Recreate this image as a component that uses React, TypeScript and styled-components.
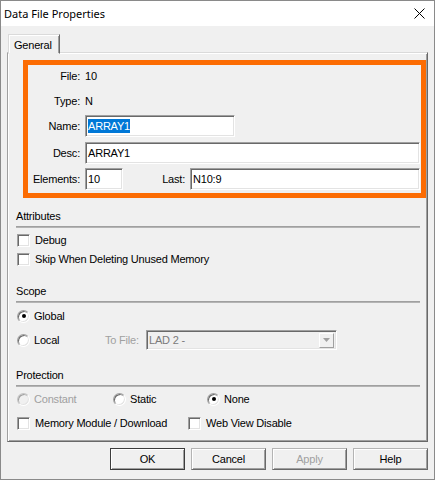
import { ReactNode } from "react";
import styled, { createGlobalStyle } from "styled-components";

const GlobalStyle = createGlobalStyle`
	html, body {
		margin: 0;
		padding: 0;
		background: #f0f0f0;
	}
`;

const Window = styled.div`
	width: 435px;
	height: 480px;
	box-sizing: border-box;
	border: 1px solid #8a8a8a;
	display: flex;
	flex-direction: column;
	background: #f0f0f0;
	font: 11px "Liberation Sans", Arial, sans-serif;
	letter-spacing: -0.2px;
	color: #000;
`;

const TitleBar = styled.div`
	height: 25px;
	flex: none;
	background: #fff;
	display: flex;
	align-items: center;
	justify-content: space-between;
	padding: 0 9px 0 3px;
`;

const Title = styled.span`
	font: 11px "Noto Sans", "Liberation Sans", sans-serif;
	letter-spacing: 0;
`;

const Body = styled.div`
	flex: 1;
	padding: 8px 6px 8px 6px;
	display: flex;
	flex-direction: column;
`;

const TabStrip = styled.div`
	display: flex;
	padding-left: 1px;
	height: 19px;
	position: relative;
	z-index: 1;
	margin-bottom: -1px;
`;

const Tab = styled.div`
	width: 52px;
	height: 20px;
	box-sizing: border-box;
	border: 1px solid;
	border-color: #dadada #696969 transparent #dadada;
	box-shadow: inset 1px 1px 0 #fff, inset -1px 0 0 #a0a0a0;
	background: #f0f0f0;
	padding: 3px 0 0 5px;
	line-height: 14px;
`;

const Panel = styled.div`
	height: 390px;
	box-sizing: border-box;
	border: 1px solid;
	border-color: #dadada #696969 #696969 #a0a0a0;
	box-shadow: inset 1px 1px 0 #fff, inset -1px -1px 0 #a0a0a0;
	padding-top: 7px;
`;

const Highlight = styled.div`
	margin: 0 1px 0 15px;
	border: 5px solid #fc6c03;
	padding: 0 1px 3px 0;
`;

const FieldRow = styled.div<{ $top?: number }>`
	display: flex;
	align-items: center;
	height: 22px;
	gap: 5px;
	margin-top: ${({ $top = 0 }) => $top}px;
`;

const FieldLabel = styled.span<{ $width?: number; $grow?: boolean }>`
	width: ${({ $width = 52 }) => $width}px;
	flex: ${({ $grow }) => ($grow ? "1" : "none")};
	text-align: right;
`;

const TextBox = styled.div<{ $width: number }>`
	width: ${({ $width }) => $width}px;
	height: 22px;
	box-sizing: border-box;
	flex: none;
	background: #fff;
	border: 1px solid;
	border-color: #a0a0a0 #fff #fff #a0a0a0;
	box-shadow: inset 1px 1px 0 #696969, inset -1px -1px 0 #e3e3e3;
	padding-left: 2px;
	line-height: 20px;
	white-space: nowrap;
	overflow: hidden;
`;

const Selected = styled.span`
	background: #0078d7;
	color: #fff;
	padding: 1px 0;
`;

const Section = styled.div`
	margin: 0 7px 0 8px;
`;

const SectionTitle = styled.div<{ $top: number }>`
	line-height: 14px;
	margin-top: ${({ $top }) => $top}px;
`;

const Rule = styled.div`
	margin-top: 3px;
	border-top: 1px solid #a0a0a0;
	border-bottom: 1px solid #b4b4b4;
	margin-bottom: 4px;
`;

const OptionRow = styled.div<{ $top?: number; $height?: number }>`
	display: flex;
	align-items: center;
	height: ${({ $height = 16 }) => $height}px;
	padding-left: 1px;
	margin-top: ${({ $top = 0 }) => $top}px;
`;

const Option = styled.label<{ $width?: number; $disabled?: boolean }>`
	display: flex;
	align-items: center;
	width: ${({ $width }) => ($width ? `${$width}px` : "auto")};
	flex: none;
	color: ${({ $disabled }) => ($disabled ? "#a0a0a0" : "#000")};
`;

const CheckBox = styled.span`
	width: 13px;
	height: 13px;
	box-sizing: border-box;
	flex: none;
	background: #fff;
	border: 1px solid;
	border-color: #a0a0a0 #fff #fff #a0a0a0;
	box-shadow: inset 1px 1px 0 #696969, inset -1px -1px 0 #e3e3e3;
	margin-right: 5px;
`;

const Radio = styled.span<{ $checked?: boolean; $disabled?: boolean }>`
	width: 13px;
	height: 13px;
	box-sizing: border-box;
	flex: none;
	border-radius: 50%;
	background: ${({ $disabled }) => ($disabled ? "#f0f0f0" : "#fff")};
	border: 1px solid;
	border-color: ${({ $disabled }) =>
		$disabled ? "#c4c4c4 #fff #fff #c4c4c4" : "#a0a0a0 #fff #fff #a0a0a0"};
	box-shadow: inset 1px 1px 0 ${({ $disabled }) => ($disabled ? "#a0a0a0" : "#696969")},
		inset -1px -1px 0 #e3e3e3;
	margin-right: 4px;
	display: grid;
	place-items: center;
	&::after {
		content: "";
		width: 4px;
		height: 4px;
		border-radius: 50%;
		background: #000;
		display: ${({ $checked }) => ($checked ? "block" : "none")};
	}
`;

const DisabledText = styled.span`
	color: #a0a0a0;
	width: 41px;
	flex: none;
`;

const Combo = styled.div`
	width: 191px;
	height: 20px;
	box-sizing: border-box;
	display: flex;
	align-items: center;
	justify-content: space-between;
	background: #f0f0f0;
	border: 1px solid;
	border-color: #a0a0a0 #fff #fff #a0a0a0;
	box-shadow: inset 1px 1px 0 #696969, inset -1px -1px 0 #e3e3e3;
	padding: 0 2px 0 2px;
	color: #7a7a7a;
`;

const ComboArrow = styled.span`
	width: 15px;
	height: 15px;
	box-sizing: border-box;
	border: 1px solid;
	border-color: #fff #a0a0a0 #a0a0a0 #fff;
	display: grid;
	place-items: center;
`;

const ButtonRow = styled.div`
	display: flex;
	justify-content: flex-end;
	gap: 6px;
	margin-top: 6px;
`;

const Button = styled.button<{ $default?: boolean }>`
	width: 75px;
	height: 22px;
	box-sizing: border-box;
	font: inherit;
	letter-spacing: inherit;
	background: #f0f0f0;
	color: ${({ disabled }) => (disabled ? "#a0a0a0" : "#000")};
	border: 1px solid;
	border-color: ${({ $default }) =>
		$default ? "#3c3c3c" : "#b4b4b4 #696969 #696969 #b4b4b4"};
	box-shadow: inset 1px 1px 0 #fff, inset -1px -1px 0 #a0a0a0;
	padding: 0;
`;

const CloseIcon = () => (
	<svg width="11" height="11" viewBox="0 0 11 11">
		<path d="M0.5 0.5L10.5 10.5M10.5 0.5L0.5 10.5" stroke="#000" strokeWidth="1" />
	</svg>
);

const DownArrow = () => (
	<svg width="7" height="4" viewBox="0 0 7 4">
		<path d="M0 0H7L3.5 4Z" fill="#a0a0a0" />
	</svg>
);

const Check = ({ children, width }: { children: ReactNode; width?: number }) => (
	<Option $width={width}>
		<CheckBox />
		{children}
	</Option>
);

const RadioOption = ({
	children,
	width,
	checked,
	disabled
}: {
	children: ReactNode;
	width?: number;
	checked?: boolean;
	disabled?: boolean;
}) => (
	<Option $width={width} $disabled={disabled}>
		<Radio $checked={checked} $disabled={disabled} />
		{children}
	</Option>
);

const App = () => (
	<Window>
		<GlobalStyle />
		<TitleBar>
			<Title>Data File Properties</Title>
			<CloseIcon />
		</TitleBar>
		<Body>
			<TabStrip>
				<Tab>General</Tab>
			</TabStrip>
			<Panel>
				<Highlight>
					<FieldRow>
						<FieldLabel>File:</FieldLabel>
						<span>10</span>
					</FieldRow>
					<FieldRow $top={3}>
						<FieldLabel>Type:</FieldLabel>
						<span>N</span>
					</FieldRow>
					<FieldRow $top={3}>
						<FieldLabel>Name:</FieldLabel>
						<TextBox $width={150}>
							<Selected>ARRAY1</Selected>
						</TextBox>
					</FieldRow>
					<FieldRow $top={5}>
						<FieldLabel>Desc:</FieldLabel>
						<TextBox $width={335}>ARRAY1</TextBox>
					</FieldRow>
					<FieldRow $top={4}>
						<FieldLabel>Elements:</FieldLabel>
						<TextBox $width={38}>10</TextBox>
						<FieldLabel $grow>Last:</FieldLabel>
						<TextBox $width={230}>N10:9</TextBox>
					</FieldRow>
				</Highlight>

				<Section>
					<SectionTitle $top={11}>Attributes</SectionTitle>
					<Rule />
					<OptionRow>
						<Check>Debug</Check>
					</OptionRow>
					<OptionRow $top={3}>
						<Check>Skip When Deleting Unused Memory</Check>
					</OptionRow>

					<SectionTitle $top={17}>Scope</SectionTitle>
					<Rule />
					<OptionRow $top={5}>
						<RadioOption checked>Global</RadioOption>
					</OptionRow>
					<OptionRow $top={6} $height={20}>
						<RadioOption width={88}>Local</RadioOption>
						<DisabledText>To File:</DisabledText>
						<Combo>
							<span>LAD 2 -</span>
							<ComboArrow>
								<DownArrow />
							</ComboArrow>
						</Combo>
					</OptionRow>

					<SectionTitle $top={18}>Protection</SectionTitle>
					<Rule />
					<OptionRow $top={1}>
						<RadioOption width={96} disabled>Constant</RadioOption>
						<RadioOption width={94}>Static</RadioOption>
						<RadioOption checked>None</RadioOption>
					</OptionRow>
					<OptionRow $top={8}>
						<Check width={171}>Memory Module / Download</Check>
						<Check>Web View Disable</Check>
					</OptionRow>
				</Section>
			</Panel>
			<ButtonRow>
				<Button $default>OK</Button>
				<Button>Cancel</Button>
				<Button disabled>Apply</Button>
				<Button>Help</Button>
			</ButtonRow>
		</Body>
	</Window>
);

export default App;
